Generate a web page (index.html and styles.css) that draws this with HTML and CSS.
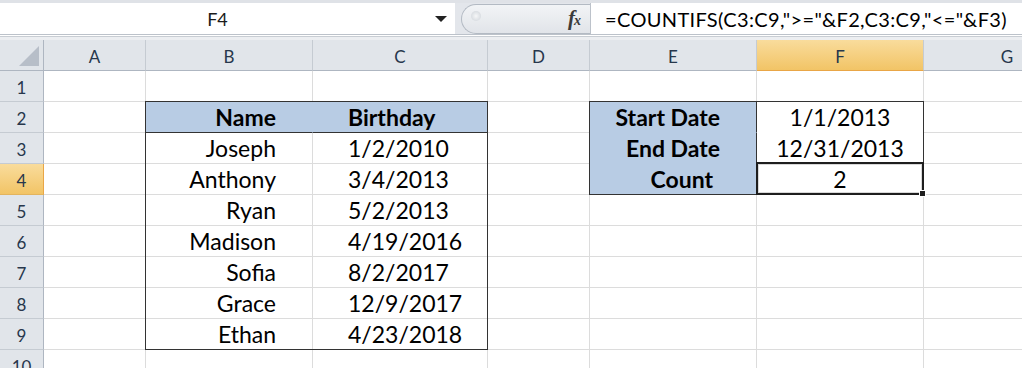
FILE: index.html
```html
<!DOCTYPE html>
<html lang="en">
<head>
<meta charset="UTF-8">
<title>COUNTIFS</title>
<link rel="stylesheet" href="styles.css">
</head>
<body>
<header class="bar">
	<div class="namebox">
		<span class="name">F4</span>
		<span class="arrow"></span>
	</div>
	<div class="fxzone">
		<div class="fxbtn">
			<span class="dot"></span>
			<span class="fx"><i>f</i><sub>x</sub></span>
		</div>
	</div>
	<div class="formula">=COUNTIFS(C3:C9,"&gt;="&amp;F2,C3:C9,"&lt;="&amp;F3)</div>
</header>
<div class="split"></div>
<section class="sheet">
	<div class="cells"></div>
	<div class="frames">
		<div class="frame frame1"></div>
		<div class="frame frame2"></div>
		<div class="active"></div>
	</div>
</section>
<script type="text/javascript">
(function(){
	let cells = document.querySelector('.cells');
	let cols = ['A','B','C','D','E','F','G'];

	/* 每行的内容: 列 -> [文字, 类名] */
	let data = {
		2: {B:['Name','head r'], C:['Birthday','head l'], E:['Start Date','label r'], F:['1/1/2013','white m']},
		3: {B:['Joseph','r'], C:['1/2/2010','l'], E:['End Date','label r'], F:['12/31/2013','white m']},
		4: {B:['Anthony','r'], C:['3/4/2013','l'], E:['Count','label r count'], F:['2','m']},
		5: {B:['Ryan','r'], C:['5/2/2013','l']},
		6: {B:['Madison','r'], C:['4/19/2016','l']},
		7: {B:['Sofia','r'], C:['8/2/2017','l']},
		8: {B:['Grace','r'], C:['12/9/2017','l']},
		9: {B:['Ethan','r'], C:['4/23/2018','l']}
	};

	let html = `<div class="h corner"><svg width="22" height="22" viewBox="0 0 22 22"><polygon points="21,1 21,21 1,21" fill="#b7bec8"/></svg></div>`;
	cols.forEach((c)=>{
		html += `<div class="h col${c == 'F' ? ' sel' : ''}">${c}</div>`;
	});

	for(let r = 1; r <= 10; r++){
		html += `<div class="h row${r == 4 ? ' sel' : ''}">${r}</div>`;
		cols.forEach((c)=>{
			let cell = (data[r] || {})[c];
			html += cell ? `<div class="c ${cell[1]}">${cell[0]}</div>` : `<div class="c"></div>`;
		});
	}
	cells.innerHTML = html;
})();
</script>
</body>
</html>
```

FILE: styles.css
```css
body {
	margin: 0;
	overflow: hidden;
	background: #fff;
	font-family: Lato, "Liberation Sans", sans-serif;
	color: #000;
}

/* 编辑栏 */
.bar {
	display: flex;
	height: 31px;
	border-top: 3px solid #dfe2e7;
	border-bottom: 1px solid #bcc2ca;
}
.namebox {
	display: flex;
	align-items: center;
	width: 455px;
	background: #fff;
}
.name {
	flex: 1;
	text-align: center;
	font-size: 18px;
	color: #1a1a1a;
}
.arrow {
	width: 0;
	height: 0;
	margin-right: 8px;
	border-left: 6px solid transparent;
	border-right: 6px solid transparent;
	border-top: 6px solid #222;
}
.fxzone {
	display: flex;
	align-items: center;
	width: 135px;
	background: #e3e6eb;
}
.fxbtn {
	display: flex;
	flex: 1;
	align-items: center;
	justify-content: space-between;
	height: 28px;
	margin-left: 6px;
	padding: 0 9px 0 9px;
	border: 1px solid #b3bac3;
	border-right: none;
	border-radius: 15px 0 0 15px;
	background: linear-gradient(#f2f4f6, #e1e4e9);
}
.dot {
	width: 10px;
	height: 10px;
	margin-top: -6px;
	border-radius: 50%;
	background: radial-gradient(#f6f7f8, #cdd2d8);
}
.fx {
	font: italic bold 21px "Liberation Serif", serif;
	color: #3b3b3b;
}
.fx i {
	font-style: italic;
}
.fx sub {
	font-size: 14px;
	vertical-align: 0;
	margin-left: -1px;
}
.formula {
	display: flex;
	flex: 1;
	align-items: center;
	padding-left: 14px;
	background: #fff;
	border-left: 1px solid #bcc2ca;
	font-size: 20px;
	letter-spacing: 0.35px;
	white-space: nowrap;
}
.split {
	height: 5px;
	background: linear-gradient(#fff 0 1px, #c8cdd3 1px 2px, #eceef1 2px);
}

/* 表格 */
.sheet {
	display: grid;
}
.cells,
.frames {
	grid-area: 1 / 1;
	display: grid;
	grid-template-columns: 44px 102px 167px 175px 102px 167px 167px 167px;
	grid-template-rows: repeat(11, 31px);
}
.frames {
	pointer-events: none;
}
.cells div {
	box-sizing: border-box;
	display: flex;
	align-items: center;
	overflow: hidden;
	white-space: nowrap;
}
.h {
	justify-content: center;
	background: #e1e5ea;
	border-right: 1px solid #c5cbd2;
	border-bottom: 1px solid #c5cbd2;
	font-size: 17px;
	color: #27374c;
}
.h.col {
	border-bottom-color: #aeb6c1;
	padding-top: 3px;
}
.h.row {
	border-right-color: #aeb6c1;
	padding-top: 2px;
}
.h.sel {
	background: linear-gradient(#f9dc9c, #f2c466);
	border-bottom-color: #e9a646;
}
.h.row.sel {
	border-right-color: #e9a646;
	border-bottom-color: #e3b45e;
}
.corner {
	align-items: flex-end !important;
	justify-content: flex-end !important;
	padding: 0 3px 3px 0;
	border-bottom-color: #aeb6c1 !important;
	border-right-color: #aeb6c1 !important;
}
.c {
	border-right: 1px solid #dcdcdc;
	border-bottom: 1px solid #dcdcdc;
	font-size: 23px;
}
.c.r {
	justify-content: flex-end;
	padding-right: 36px;
}
.c.l {
	padding-left: 35px;
}
.c.m {
	justify-content: center;
}
.c.head {
	font-weight: bold;
	background: #b8cce4;
	border-right-color: #b8cce4;
	border-bottom-color: #333;
}
.c.label {
	font-weight: bold;
	background: #b8cce4;
	border-bottom-color: #b8cce4;
	border-right-color: #333;
}
.c.count {
	padding-right: 43px;
}
.c.white {
	border-bottom-color: #fff;
}
.frame {
	margin: -1px 0 0 -1px;
	border: 1px solid #333;
}
.frame1 {
	grid-column: 3 / 5;
	grid-row: 3 / 11;
}
.frame2 {
	grid-column: 6 / 8;
	grid-row: 3 / 6;
}
.active {
	position: relative;
	grid-column: 7;
	grid-row: 5;
	margin: -2px 0 0 -1px;
	border: 2px solid #1e1e1e;
	box-shadow: inset 0 0 0 1px #d8d8d8;
}
.active::after {
	content: "";
	position: absolute;
	right: -4px;
	bottom: -4px;
	width: 5px;
	height: 5px;
	background: #1e1e1e;
	border: 1px solid #fff;
}
```
